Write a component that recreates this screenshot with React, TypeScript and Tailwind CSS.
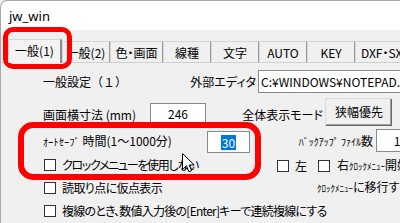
import type { ReactNode } from 'react';

const tabs = [
  { label: '一般(2)', w: 'w-[48px]' },
  { label: '色・画面', w: 'w-[53px]' },
  { label: '線種', w: 'w-[48px]' },
  { label: '文字', w: 'w-[48px]' },
  { label: 'AUTO', w: 'w-[48px]' },
  { label: 'KEY', w: 'w-[48px]' },
  { label: 'DXF・SXF', w: 'w-[60px]' },
];

function Check() {
  return <span className="block w-[12px] h-[12px] shrink-0 bg-white border border-[#333]" />;
}

function Edit({ className, children }: { className: string; children?: ReactNode }) {
  return (
    <div className={`shrink-0 bg-white border border-[#8a8a8a] flex items-center ${className}`}>
      {children}
    </div>
  );
}

function Cursor() {
  return (
    <svg className="absolute left-[182px] top-[153px]" width="13" height="21" viewBox="0 0 13 21">
      <path
        d="M0.5 0.5 L0.5 16.5 L4.5 12.8 L7 18.8 L9.6 17.7 L7.2 12 L12.2 12 Z"
        fill="#fff"
        stroke="#000"
        strokeWidth="1"
      />
    </svg>
  );
}

export default function App() {
  return (
    <div className="relative w-[400px] h-[223px] overflow-hidden whitespace-nowrap bg-[#f0f0f0] text-black text-[12px] leading-[14px] [font-feature-settings:'palt'] [font-family:'Noto_Sans_CJK_JP',sans-serif]">
      {/* title bar */}
      <div className="h-[30px] bg-white border-t border-l border-[#a8a8a8] rounded-tl-[7px] flex items-center pl-[8px]">
        <span className="text-[13px] [font-family:'Noto_Sans',sans-serif]">jw_win</span>
      </div>

      <div className="border-l border-[#a8a8a8] h-[193px]">
        {/* tab strip */}
        <div className="flex items-end h-[32px] pl-[7px]">
          <div className="relative z-10 w-[54px] shrink-0 h-[24px] -mb-px bg-[#f3f3f3] border-t border-l border-[#d6d6d6] border-r-2 border-r-[#8e8e8e] flex items-center justify-center pb-[1px]">
            一般(1)
          </div>
          {tabs.map((t) => (
            <div
              key={t.label}
              className={`${t.w} shrink-0 h-[21px] border-t border-l border-[#d6d6d6] border-r border-r-[#9a9a9a] flex items-center justify-center pt-[1px]`}
            >
              {t.label}
            </div>
          ))}
        </div>

        {/* panel */}
        <div className="border-t border-[#d0d0d0]">
          {/* row 1 */}
          <div className="flex items-center h-[23px] mt-[7px]">
            <div className="w-[257px] shrink-0 pl-[42px] pr-[2px] flex justify-between">
              <span className="[font-feature-settings:normal]">一般設定（１）</span>
              <span>外部エディタ</span>
            </div>
            <Edit className="w-[160px] h-[23px] pl-[2px]">
              <span>C:¥WINDOWS¥NOTEPAD.EXE</span>
            </Edit>
          </div>

          {/* row 2 */}
          <div className="flex items-start h-[28px] mt-[5px]">
            <span className="w-[149px] pl-[42px] shrink-0 mt-[10px]">画面横寸法 (mm)</span>
            <Edit className="w-[56px] h-[22px] mt-[5px] justify-center">246</Edit>
            <div className="w-[119px] shrink-0 mt-[10px] pr-[2px] flex justify-end">
              <span>全体表示モード</span>
            </div>
            <div className="w-[67px] h-[28px] shrink-0 bg-[#f0f0f0] border-t border-l border-[#dcdcdc] shadow-[inset_-1px_-1px_#696969,inset_-2px_-2px_#a0a0a0] flex items-center justify-center pb-[1px]">
              狭幅優先
            </div>
          </div>

          {/* row 3 */}
          <div className="flex items-start h-[24px] mt-[3px]">
            <span className="w-[206px] pl-[42px] shrink-0 mt-[5px]">
              <span className="text-[10px] tracking-[0.3px]">ｵｰﾄｾｰﾌﾞ</span> 時間(1〜1000分)
            </span>
            <Edit className="w-[43px] h-[22px] mt-[2px] justify-center">
              <span className="bg-[#0078d7] text-white px-[1px] leading-[15px]">30</span>
            </Edit>
            <div className="w-[126px] shrink-0 mt-[5px] pr-[3px] flex justify-end">
              <span>
                <span className="text-[10px]">ﾊﾞｯｸｱｯﾌﾟ ﾌｧｲﾙ</span>数
              </span>
            </div>
            <Edit className="w-[40px] h-[23px] justify-center pl-[2px]">1</Edit>
          </div>

          {/* row 4 */}
          <div className="flex items-center h-[12px] mt-[6px]">
            <div className="w-[276px] shrink-0 pl-[43px] flex items-center gap-[6px]">
              <Check />
              <span className="tracking-[-1.3px]">クロックメニューを使用しない</span>
            </div>
            <div className="w-[41px] shrink-0 flex items-center gap-[6px] mt-[2px]">
              <Check />
              <span>左</span>
            </div>
            <div className="flex items-center gap-[7px] mt-[2px]">
              <Check />
              <span>
                右<span className="text-[9px]">ｸﾛｯｸﾒﾆｭｰ</span>開始
              </span>
            </div>
          </div>

          {/* row 5 */}
          <div className="flex items-center h-[12px] mt-[11px]">
            <div className="w-[316px] shrink-0 pl-[43px] flex items-center gap-[6px]">
              <Check />
              <span className="tracking-[-0.6px]">読取り点に仮点表示</span>
            </div>
            <span className="-mt-[1px]">
              <span className="text-[9px]">ｸﾛｯｸﾒﾆｭｰ</span>に移行する
            </span>
          </div>

          {/* row 6 */}
          <div className="flex items-center h-[12px] mt-[11px]">
            <div className="pl-[43px] flex items-center gap-[6px]">
              <Check />
              <span className="tracking-[-0.75px]">複線のとき、数値入力後の[Enter]キーで連続複線にする</span>
            </div>
          </div>
        </div>
      </div>

      {/* annotations */}
      <div className="absolute left-[3px] top-[27px] w-[69px] h-[42px] border-[5px] border-[#ff0000] rounded-[10px]" />
      <div className="absolute left-[18px] top-[122px] w-[243px] h-[58px] border-[6px] border-[#ff0000] rounded-[15px]" />
      <Cursor />
    </div>
  );
}
